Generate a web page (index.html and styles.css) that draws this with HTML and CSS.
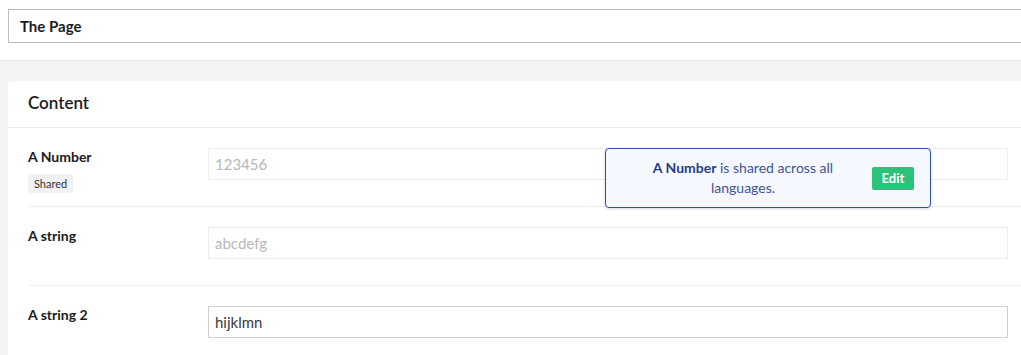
FILE: index.html
```html
<!DOCTYPE html>
<html lang="en">
<head>
    <meta charset="UTF-8">
    <title>The Page</title>
    <link rel="stylesheet" href="styles.css">
</head>
<body>
    <div class="page">
        <div class="page-name">
            <input type="text" class="name-input" value="The Page">
        </div>

        <div class="editor">
            <div class="card">
                <div class="card-header">Content</div>

                <div class="prop-row">
                    <div class="prop-label">
                        <div class="label-text">A Number</div>
                        <span class="badge">Shared</span>
                    </div>
                    <div class="prop-field">
                        <input type="text" class="field-input" placeholder="123456" disabled>
                    </div>
                    <div class="shared-tip">
                        <div class="tip-text"><strong>A Number</strong> is shared across all languages.</div>
                        <button class="tip-button">Edit</button>
                    </div>
                </div>

                <div class="prop-row">
                    <div class="prop-label">
                        <div class="label-text">A string</div>
                    </div>
                    <div class="prop-field">
                        <input type="text" class="field-input" placeholder="abcdefg" disabled>
                    </div>
                </div>

                <div class="prop-row">
                    <div class="prop-label">
                        <div class="label-text">A string 2</div>
                    </div>
                    <div class="prop-field">
                        <input type="text" class="field-input" value="hijklmn">
                    </div>
                </div>
            </div>
        </div>
    </div>
</body>
</html>
```

FILE: styles.css
```css
body {
    margin: 0;
    font-family: Lato, "Open Sans", sans-serif;
    color: #1b1b1d;
    background: #fff;
    overflow: hidden;
}

.page {
    width: 1040px;
}

.page-name {
    padding: 9px 0 17px 8px;
}

.name-input {
    box-sizing: border-box;
    width: 1020px;
    height: 34px;
    padding: 0 11px;
    border: 1px solid #bdbdbd;
    font-family: Lato, sans-serif;
    font-size: 15px;
    font-weight: bold;
    color: #1b1b1d;
    outline: none;
}

.editor {
    background: #f4f3f3;
    border-top: 1px solid #e8e7e7;
    padding: 20px 0 0 8px;
    height: 300px;
}

.card {
    background: #fff;
    border-radius: 3px 0 0 0;
    width: 1020px;
}

.card-header {
    height: 46px;
    line-height: 44px;
    padding: 0 20px;
    font-size: 17px;
    font-weight: 600;
    border-bottom: 1px solid #ececec;
}

.prop-row {
    position: relative;
    display: flex;
    margin-left: 20px;
    padding: 20px 20px 20px 0;
    height: 38px;
    border-bottom: 1px solid #efefef;
}

.prop-label {
    width: 180px;
    flex-shrink: 0;
}

.label-text {
    font-size: 14px;
    font-weight: bold;
    line-height: 18px;
}

.badge {
    display: inline-block;
    margin-top: 8px;
    padding: 0 6px;
    height: 19px;
    line-height: 19px;
    font-size: 11px;
    color: #333;
    background: #f1f1f3;
    border-radius: 3px;
}

.prop-field {
    flex: 1;
}

.field-input {
    box-sizing: border-box;
    width: 100%;
    height: 32px;
    padding: 0 6px;
    border: 1px solid #cfcfcf;
    font-family: Lato, sans-serif;
    font-size: 15px;
    color: #3a3a3a;
    background: #fff;
    outline: none;
}

.field-input:disabled {
    border-color: #ececec;
}

.field-input::placeholder {
    color: #b8b8b8;
}

.shared-tip {
    position: absolute;
    left: 577px;
    top: 20px;
    box-sizing: border-box;
    width: 326px;
    height: 60px;
    display: flex;
    align-items: center;
    padding: 0 16px 0 20px;
    background: #f5f8fe;
    border: 1px solid #2d50a3;
    border-radius: 4px;
    box-shadow: 0 1px 3px rgba(30, 60, 140, 0.2);
}

.tip-text {
    flex: 1;
    text-align: center;
    font-size: 14px;
    line-height: 20px;
    color: #3f5396;
}

.tip-text strong {
    color: #2a3d7e;
}

.tip-button {
    margin-left: 12px;
    width: 42px;
    height: 23px;
    padding: 0;
    border: none;
    border-radius: 2px;
    background: #2bc37a;
    color: #fff;
    font-family: Lato, sans-serif;
    font-size: 13px;
    font-weight: bold;
    cursor: pointer;
}
```
